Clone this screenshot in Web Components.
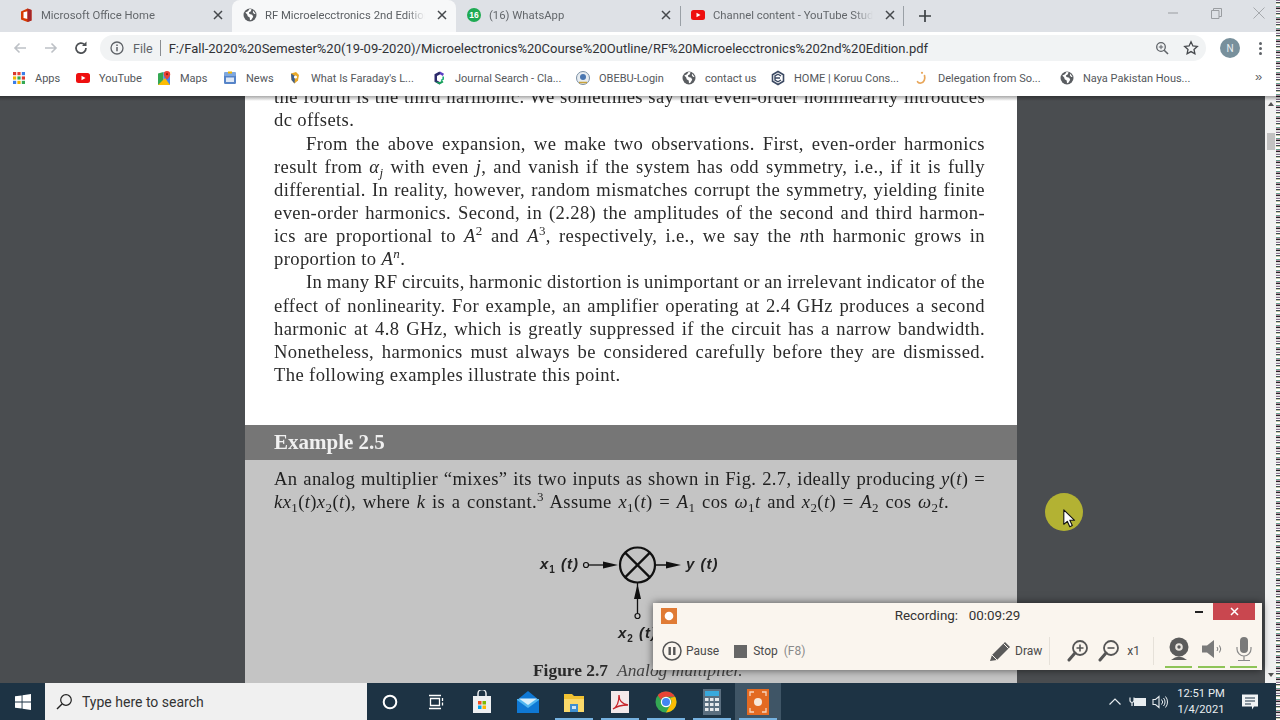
<!DOCTYPE html>
<html><head><meta charset="utf-8"><title>Recording</title>
<style>
html,body{margin:0;padding:0;width:1280px;height:720px;overflow:hidden;background:#4a4d50}
pdf-line i{font-style:italic}
pdf-line sup,pdf-line sub{font-size:.7em;line-height:0}
pdf-line sub{vertical-align:-.28em}
pdf-line sup{vertical-align:.55em}
</style></head><body>
<app-root>
  <tab-strip>
    <tab-item icon="office">Microsoft Office Home</tab-item>
    <tab-item icon="globe" active>RF Microelecctronics 2nd Edition</tab-item>
    <tab-item icon="whatsapp">(16) WhatsApp</tab-item>
    <tab-item icon="youtube" sep>Channel content - YouTube Studio</tab-item>
  </tab-strip>
  <tool-bar></tool-bar>
  <book-marks>
    <book-mark icon="apps" style="--w:64px">Apps</book-mark>
    <book-mark icon="youtube" style="--w:81px">YouTube</book-mark>
    <book-mark icon="maps" style="--w:66px">Maps</book-mark>
    <book-mark icon="news" style="--w:65px">News</book-mark>
    <book-mark icon="shield" style="--w:144px">What Is Faraday's L...</book-mark>
    <book-mark icon="journal" style="--w:144px">Journal Search - Cla...</book-mark>
    <book-mark icon="seal" style="--w:106px">OBEBU-Login</book-mark>
    <book-mark icon="globe" style="--w:89px">contact us</book-mark>
    <book-mark icon="koruu" style="--w:144px">HOME | Koruu Cons...</book-mark>
    <book-mark icon="hook" style="--w:145px">Delegation from So...</book-mark>
    <book-mark icon="globe" style="--w:150px">Naya Pakistan Hous...</book-mark>
  </book-marks>
  <pdf-viewer>
    <pdf-line j>the fourth is the third harmonic. We sometimes say that even-order nonlinearity introduces</pdf-line>
    <pdf-line>dc offsets.</pdf-line>
    <pdf-line j indent>From the above expansion, we make two observations. First, even-order harmonics</pdf-line>
    <pdf-line j>result from <i>α<sub><i>j</i></sub></i> with even <i>j</i>, and vanish if the system has odd symmetry, i.e., if it is fully</pdf-line>
    <pdf-line j>differential. In reality, however, random mismatches corrupt the symmetry, yielding finite</pdf-line>
    <pdf-line j>even-order harmonics. Second, in (2.28) the amplitudes of the second and third harmon-</pdf-line>
    <pdf-line j>ics are proportional to <i>A</i><sup>2</sup> and <i>A</i><sup>3</sup>, respectively, i.e., we say the <i>n</i>th harmonic grows in</pdf-line>
    <pdf-line>proportion to <i>A</i><sup><i>n</i></sup>.</pdf-line>
    <pdf-line j indent>In many RF circuits, harmonic distortion is unimportant or an irrelevant indicator of the</pdf-line>
    <pdf-line j>effect of nonlinearity. For example, an amplifier operating at 2.4 GHz produces a second</pdf-line>
    <pdf-line j>harmonic at 4.8 GHz, which is greatly suppressed if the circuit has a narrow bandwidth.</pdf-line>
    <pdf-line j>Nonetheless, harmonics must always be considered carefully before they are dismissed.</pdf-line>
    <pdf-line>The following examples illustrate this point.</pdf-line>
    <pdf-example slot="example" heading="Example 2.5">
      <pdf-line j>An analog multiplier “mixes” its two inputs as shown in Fig. 2.7, ideally producing <i>y</i>(<i>t</i>) =</pdf-line>
      <pdf-line style="word-spacing:1.600px"><i>kx</i><sub>1</sub>(<i>t</i>)<i>x</i><sub>2</sub>(<i>t</i>), where <i>k</i> is a constant.<sup>3</sup> Assume <i>x</i><sub>1</sub>(<i>t</i>) = <i>A</i><sub>1</sub> cos <i>ω</i><sub>1</sub><i>t</i> and <i>x</i><sub>2</sub>(<i>t</i>) = <i>A</i><sub>2</sub> cos <i>ω</i><sub>2</sub><i>t</i>.</pdf-line>
      <mult-figure></mult-figure>
    </pdf-example>
  </pdf-viewer>
  <task-bar></task-bar>
  <noise-strip></noise-strip>
  <rec-panel></rec-panel>
  <cursor-spot></cursor-spot>
</app-root>
<script>
const ICONS={
office:'<path d="M3 4.5 9.5 1.5 13.5 3v10.5L9.5 15 3 12.500z" fill="#d83b01"/><path d="M5.500 5.200 9.500 4.300v7.700L5.500 11z" fill="#fff"/><path d="M9.500 1.500 13.500 3v10.500L9.500 15z" fill="#a4262c"/>',
globe:'<circle cx="8" cy="8" r="6.500" fill="#5a5d61"/><path d="M3.300 5.500 6 4.300l1.500-2.300 2 .3-.6 2-2 1.200.5 1.600 2.800.6 1 2-1.800 3-1.400.6-.3-2.800-2-1.200-.5-1.800zM11 3.500l2.600 3.200-1.400.2-1.300-1.500z" fill="#fff"/>',
whatsapp:'<circle cx="8" cy="8" r="7" fill="#1faa53"/><text x="8" y="11" font-family="Liberation Sans" font-size="8.500" font-weight="700" fill="#fff" text-anchor="middle">16</text>',
youtube:'<rect x="1" y="3" width="14" height="10" rx="2.500" fill="#ee0f0f"/><path d="M6.500 5.700v4.600L10.500 8z" fill="#fff"/>',
apps:'<g><rect x="2" y="2" width="3.200" height="3.200" fill="#d9392f"/><rect x="6.400" y="2" width="3.200" height="3.200" fill="#ea4335"/><rect x="10.800" y="2" width="3.200" height="3.200" fill="#3a7de8"/><rect x="2" y="6.400" width="3.200" height="3.200" fill="#f0b400"/><rect x="6.400" y="6.400" width="3.200" height="3.200" fill="#34a853"/><rect x="10.800" y="6.400" width="3.200" height="3.200" fill="#d9392f"/><rect x="2" y="10.800" width="3.200" height="3.200" fill="#3a7de8"/><rect x="6.400" y="10.800" width="3.200" height="3.200" fill="#f0b400"/><rect x="10.800" y="10.800" width="3.200" height="3.200" fill="#34a853"/></g>',
maps:'<path d="M2 3.500 7.500 2v12L2 15z" fill="#34a853"/><path d="M7.500 2 14 3.500V15L7.500 14z" fill="#4285f4"/><path d="M2 15 9 8l5 7z" fill="#fbbc04"/><path d="M11 1a3.200 3.200 0 0 1 3.200 3.200C14.200 6.500 11 9.500 11 9.500S7.800 6.500 7.800 4.200A3.200 3.200 0 0 1 11 1z" fill="#ea4335"/><circle cx="11" cy="4.200" r="1.100" fill="#8f1d15"/>',
news:'<rect x="2" y="3.500" width="12" height="10.500" rx="1.200" fill="#5684c8"/><rect x="2" y="2" width="12" height="4" rx="1" fill="#7fa7dd"/><rect x="4" y="7.500" width="8" height="4.500" fill="#dfe8f5"/><rect x="6" y="1.500" width="4" height="2" fill="#f0b400"/>',
shield:'<path d="M4 3.500 9 2l3 3-1 5.500-3.500 3L4.500 10z" fill="#e8a92a"/><path d="M4 3.500 8 6l-.5 7.500L4.500 10z" fill="#3d5f8f"/><circle cx="8.500" cy="7" r="1.600" fill="#fff"/>',
journal:'<path d="M8.500 1.500 3.500 4.300v7.400l5 2.800 1.200-2.100-3.700-2V6l3.700-2z" fill="#2c2a6b"/><path d="M9 1.500l4 2.300-1.200 2.100L9 4.300z" fill="#5b3fc4"/><path d="M13 6.500v3l-3 1.700-.1-1.500 1.500-.9V6.500z" fill="#1fae7a"/><path d="M4 11.600 8.500 14.500l4-2.300-1.200-1.600-2.800 1.600z" fill="#17a05a"/>',
seal:'<circle cx="8" cy="8" r="6.500" fill="#e8edf1" stroke="#7a8fa3"/><circle cx="8" cy="7" r="3" fill="#4a76b0"/><path d="M4 12.500h8" stroke="#c9a23a" stroke-width="1.500"/>',
koruu:'<path d="M8 1.500 13.500 4.700v6.600L8 14.500 2.500 11.300V4.700z" fill="none" stroke="#3c4a63" stroke-width="1.600"/><path d="M11 6 8 4.200 5 6v4l3 1.800 3-1.800M5.500 8H10" fill="none" stroke="#3c4a63" stroke-width="1.400"/>',
hook:'<path d="M10.500 5.500c1 3.500-.5 7-3.500 7.500-1.500.2-3-.3-3.500-1.300" fill="none" stroke="#e8a65a" stroke-width="1.700" stroke-linecap="round"/><circle cx="8" cy="2.800" r="1.100" fill="#e8a65a"/>'
};
function svgIcon(n,s=16){return `<svg width="${s}" height="${s}" viewBox="0 0 16 16" style="display:block;flex:none">${ICONS[n]||''}</svg>`}
function mk(name,css,html,extra){
  customElements.define(name,class extends HTMLElement{
    constructor(){super();const r=this.attachShadow({mode:'open'});
      r.innerHTML=`<style>${css}</style>`+(typeof html==='function'?html(this):html);}
    connectedCallback(){if(extra)extra(this)}
  });
}
const UI='Roboto,"Noto Sans",sans-serif';
mk('app-root',`:host{display:flex;flex-direction:column;position:relative;width:1280px;height:720px;overflow:hidden;font-family:${UI}}`,`<slot></slot>`);
mk('tab-strip',`:host{display:flex;height:32px;padding-left:8px;background:#dee1e6;flex:none;position:relative;color:#5f6368}
 .plus{width:40px;display:flex;align-items:center;justify-content:center;padding-left:1px;padding-bottom:1px;box-sizing:border-box}
 .ctl{margin-left:auto;display:flex;width:128px;color:#9a9da1}
 .ctl div{width:43px;display:flex;align-items:center;justify-content:center;padding-bottom:6px}`,
 `<slot></slot><div class="plus"><svg width="12" height="12" viewBox="0 0 12 12"><path d="M6 0v12M0 6h12" stroke="#3c4043" stroke-width="1.700"/></svg></div>
 <div class="ctl"><div><svg width="10" height="10"><path d="M0 5h10" stroke="#9a9da1"/></svg></div><div><svg width="11" height="11"><path d="M.5 2.500h7.500v8H.5zM2.500 2.500V.5h8v8H8" fill="none" stroke="#9a9da1"/></svg></div><div><svg width="12" height="12"><path d="M.5.5l11 11M11.500.5l-11 11" stroke="#a6a9ad"/></svg></div></div>`);
mk('tab-item',`:host{display:flex;align-items:center;width:224px;height:32px;box-sizing:border-box;padding:0 7px 2px 10px;font-size:11.300px;position:relative;color:#63676b;flex:none}
 :host([active]){background:#f7f8f9;border-radius:8px 8px 0 0;color:#5a5e62}
 .ic{width:16px;margin-right:7px;flex:none}
 .t{flex:1;overflow:hidden;white-space:nowrap;-webkit-mask-image:linear-gradient(90deg,#000 88%,transparent);mask-image:linear-gradient(90deg,#000 88%,transparent)}
 .x{margin-left:10px;width:14px;flex:none;display:flex;justify-content:center}
 :host([sep])::after,:host([sep])::before{content:"";position:absolute;top:6px;height:20px;width:1px;background:#9aa0a6}
 :host([sep])::before{left:0}:host([sep])::after{right:0}`,
 h=>`<div class="ic">${svgIcon(h.getAttribute('icon'))}</div><div class="t"><slot></slot></div><div class="x"><svg width="10" height="10"><path d="M1 1l8 8M9 1l-8 8" stroke="#45484c" stroke-width="1.500"/></svg></div>`);
mk('tool-bar',`:host{display:flex;align-items:center;height:32px;background:#fff;flex:none;color:#5f6368;font-size:12.5px;box-sizing:border-box}
 .n{width:30px;display:flex;justify-content:center;flex:none}
 .om{display:flex;align-items:center;width:1106px;height:26px;background:#f1f3f4;border-radius:13px;margin-left:5px;flex:none;box-sizing:border-box;padding-left:10px}
 .file{margin-left:9px;color:#5f6368}
 .bar{width:1px;height:16px;background:#8a8d91;margin:0 8px 0 7px}
 .u{color:#303236;white-space:nowrap;flex:1;font-size:13px}
 .r{display:flex;gap:14px;align-items:center;margin-right:7px}
 .av{width:20px;height:20px;border-radius:50%;background:#78909c;color:#e8eef0;font-size:10px;display:flex;align-items:center;justify-content:center;margin-left:14px;flex:none}
 .dots{margin-left:19px;width:4px;display:flex;flex-direction:column;gap:2px}
 .dots b{width:3px;height:3px;border-radius:50%;background:#5f6368;display:block}`,
 `<div class="n" style="margin-left:5px"><svg width="16" height="16" viewBox="0 0 16 16"><path d="M14 8H3M7.500 3.500 3 8l4.500 4.500" fill="none" stroke="#bdc1c6" stroke-width="1.600"/></svg></div>
 <div class="n" style="margin-left:1px"><svg width="16" height="16" viewBox="0 0 16 16"><path d="M2 8h11M8.500 3.500 13 8l-4.500 4.500" fill="none" stroke="#bdc1c6" stroke-width="1.600"/></svg></div>
 <div class="n"><svg width="16" height="16" viewBox="0 0 16 16"><path d="M13 8a5 5 0 1 1-1.500-3.500" fill="none" stroke="#4d5054" stroke-width="1.700"/><path d="M13.500 1.500v4.500H9z" fill="#4d5054"/></svg></div>
 <div class="om" style="margin-left:4px"><svg width="14" height="14" viewBox="0 0 14 14"><circle cx="7" cy="7" r="6" fill="none" stroke="#5f6368" stroke-width="1.300"/><path d="M7 6v4.200M7 3.500v1.400" stroke="#5f6368" stroke-width="1.500"/></svg>
 <span class="file">File</span><span class="bar"></span><span class="u">F:/Fall-2020%20Semester%20(19-09-2020)/Microelectronics%20Course%20Outline/RF%20Microelecctronics%202nd%20Edition.pdf</span>
 <div class="r"><svg width="14" height="14" viewBox="0 0 14 14"><circle cx="6" cy="6" r="4.300" fill="none" stroke="#5f6368" stroke-width="1.300"/><path d="M9.200 9.200 13 13" stroke="#5f6368" stroke-width="1.600"/><path d="M6 3.800v4.400M3.800 6h4.400" stroke="#5f6368"/></svg>
 <svg width="16" height="16" viewBox="0 0 16 16"><path d="M8 1.800l1.900 4.100 4.400.5-3.300 3 .9 4.400L8 11.600l-3.900 2.200.9-4.400-3.300-3 4.400-.5z" fill="none" stroke="#45484c" stroke-width="1.300"/></svg></div></div>
 <div class="av">N</div><div class="dots"><b></b><b></b><b></b></div>`);
mk('book-marks',`:host{display:flex;align-items:center;height:32px;background:#fff;padding:0 0 4px 11px;flex:none;position:relative;box-sizing:border-box}
 .more{position:absolute;left:1255px;top:5px;font-size:13px;color:#5f6368;font-family:"Liberation Sans",sans-serif}`,`<slot></slot><span class="more">»</span>`);
mk('book-mark',`:host{display:flex;align-items:center;width:var(--w);flex:none;font-size:11px;color:#54575b;white-space:nowrap}
 .i{width:16px;margin-right:8px;flex:none}`,h=>`<div class="i">${svgIcon(h.getAttribute('icon'))}</div><slot></slot>`);
mk('pdf-viewer',`:host{display:block;height:587px;background:#4a4d50;flex:none;position:relative;overflow:hidden}
 .sh{position:absolute;left:0;right:0;top:0;height:5px;background:linear-gradient(#0005,#0000);z-index:2}
 .paper{width:772px;margin:-10.800px 0 0 245px;background:#fff;color:#2b2b2b;font:18.6px/23.17px "Liberation Serif",serif;height:700px;filter:blur(.25px)}
 .txt{padding:0 32px 38.300px 29px;box-sizing:content-box}
 .sb{position:absolute;left:1265px;top:0;bottom:0;width:11px;background:#f1f1f1}
 .up,.dn{position:absolute;left:3px;width:0;height:0;border:3.500px solid transparent}
 .up{top:3px;border-bottom:4px solid #505050}.dn{bottom:3px;border-top:4px solid #505050}
 .th{position:absolute;left:2px;top:37px;width:8px;height:17px;background:#c1c1c1}`,
 `<div class="sh"></div><div class="paper"><div class="txt"><slot></slot></div><slot name="example"></slot></div><div class="sb"><div class="up"></div><div class="th"></div><div class="dn"></div></div>`);
mk('pdf-line',`:host{display:block;height:23.17px;white-space:nowrap;text-align:left;letter-spacing:.38px}
 :host([j]){white-space:normal;text-align:justify;text-align-last:justify;word-spacing:-2.500px}
 :host([indent]){text-indent:32px}`,`<slot></slot>`);
mk('pdf-example',`:host{display:block;background:#c4c4c4;height:300px;color:#1f1f1f}
 .h{height:35px;background:#767676;color:#f0f0f0;font-weight:700;font-size:21px;line-height:35px;padding-left:29px}
 .b{padding:7px 32px 0 29px}`,h=>`<div class="h">${h.getAttribute('heading')}</div><div class="b"><slot></slot></div>`);
mk('mult-figure',`:host{display:block;margin:0 0 0 -29px;width:772px}
 svg{display:block;margin:18px 0 0 275px;overflow:visible}
 .cap{margin:16px 0 0 288px;font-size:17.4px;line-height:22px;white-space:nowrap;color:#2a2a2a;letter-spacing:0}
 .cap b{margin-right:9px}.cap i{color:#444}`,
 `<svg width="200" height="112" viewBox="0 0 200 112">
 <g font-family="Liberation Sans" font-weight="700" font-style="italic" font-size="15" fill="#222" letter-spacing="1">
  <text x="20" y="38">x<tspan font-size="10" dy="4" font-style="normal">1</tspan><tspan dy="-4"> (t)</tspan></text>
  <text x="166" y="38">y (t)</text>
  <text x="98" y="107">x<tspan font-size="10" dy="4" font-style="normal">2</tspan><tspan dy="-4"> (t)</tspan></text></g>
 <g fill="none" stroke="#111"><circle cx="66" cy="34" r="2.500" stroke-width="1.200"/><path d="M69 34h14" stroke-width="1.300"/><circle cx="117.500" cy="34" r="17.500" stroke-width="2.200"/><path d="M105.100 21.600l24.800 24.800M129.900 21.600l-24.800 24.800" stroke-width="2.200"/><path d="M135 34h11M117.500 52v30" stroke-width="1.300"/><circle cx="117.500" cy="85" r="2.500" stroke-width="1.200"/></g>
 <path d="M83 30.500 98 34l-15 3.500zM146 30.500 161 34l-15 3.500zM114 68 117.500 53l3.500 15z" fill="#111"/></svg>
 <div class="cap"><b>Figure 2.7</b><i>Analog multiplier.</i></div>`);
mk('task-bar',`:host{display:flex;height:37px;background:#1d3344;color:#fff;flex:none;align-items:stretch;position:relative}
 .w{width:45px;display:flex;align-items:center;justify-content:center;flex:none}
 .s{width:322px;background:#f0f0f0;color:#333;display:flex;align-items:center;font-size:14px;flex:none}
 .s svg{margin:0 9px 0 10px}
 .c{width:46px;display:flex;align-items:center;justify-content:center;flex:none;box-sizing:border-box;position:relative}
 .u::after{content:"";position:absolute;left:4px;right:4px;bottom:0;height:2px;background:#76b2e0}
 .a{background:#3f5566}
 .tray{margin-left:auto;display:flex;align-items:center;padding-right:10px}
 .t{width:23px;display:flex;justify-content:center;flex:none}
 .clk{width:58px;text-align:center;font-size:11.200px;line-height:16px;color:#e8edf0;flex:none}
 .n{width:40px;display:flex;justify-content:center;flex:none}`,
 `<div class="w"><svg width="16" height="16" viewBox="0 0 16 16"><path d="M0 2.300 6.600 1.400v6.100H0zM7.500 1.300 16 0v7.500H7.500zM0 8.400h6.600v6.100L0 13.700zM7.500 8.400H16V16l-8.500-1.200z" fill="#fff"/></svg></div>
 <div class="s"><svg width="18" height="18" viewBox="0 0 18 18"><circle cx="11" cy="7" r="5.300" fill="none" stroke="#222" stroke-width="1.200"/><path d="M7 11 2 16" stroke="#222" stroke-width="1.400"/></svg>Type here to search</div>
 <div class="c"><svg width="16" height="16"><circle cx="8" cy="8" r="6.300" fill="none" stroke="#fff" stroke-width="2"/></svg></div>
 <div class="c"><svg width="18" height="16" viewBox="0 0 18 16"><path d="M3.500 4.500h9v7h-9zM2 1.500h12M2 14.500h12" fill="none" stroke="#fff" stroke-width="1.300"/><path d="M15.500 4v8" stroke="#fff" stroke-width="1.300" stroke-dasharray="3 1.500"/></svg></div>
 <div class="c"><svg width="22" height="24" viewBox="0 0 22 24"><path d="M2 6h18v17H2z" fill="#eef0f2"/><path d="M7 7V3.500a4 4 0 0 1 8 0V7" fill="none" stroke="#eef0f2" stroke-width="1.500"/><path d="M7 11h3.500v3.500H7z" fill="#f25022"/><path d="M11.500 11H15v3.500h-3.500z" fill="#7fba00"/><path d="M7 15.500h3.500V19H7z" fill="#00a4ef"/><path d="M11.500 15.500H15V19h-3.500z" fill="#ffb900"/></svg></div>
 <div class="c"><svg width="24" height="24" viewBox="0 0 24 24"><path d="M1 10 12 1l11 9v13H1z" fill="#0f78d4"/><path d="M1 10l11 8 11-8v-1H1z" fill="#51b6f0"/><path d="M3 8.500h18L12 15z" fill="#d9effb"/></svg></div>
 <div class="c u"><svg width="22" height="22" viewBox="0 0 22 22"><path d="M1 3h8l2 2h10v16H1z" fill="#f1c232"/><path d="M1 8h20v13H1z" fill="#fbd96a"/><path d="M7 13h8v8H7z" fill="#3f8fd0"/><path d="M9 15h4v3H9z" fill="#cfe6f7"/></svg></div>
 <div class="c u"><svg width="20" height="24" viewBox="0 0 20 24"><path d="M1 1h18v22H1z" fill="#f4e9ea"/><path d="M3 19c4-2 6-8 6-14 0 6 3 9 9 10-6 0-11 1-15 4z" fill="none" stroke="#c8252b" stroke-width="1.300"/></svg></div>
 <div class="c u"><svg width="22" height="22" viewBox="0 0 22 22"><circle cx="11" cy="11" r="10.500" fill="#34a853"/><path d="M11 .5a10.500 10.500 0 0 1 9.100 5.300H11A5.200 5.200 0 0 0 6 9L2.800 4.200A10.500 10.500 0 0 1 11 .5z" fill="#ea4335"/><path d="M20.100 5.800A10.500 10.500 0 0 1 11 21.500l4.500-7.900A5.200 5.200 0 0 0 15 7z" fill="#fbbc04"/><circle cx="11" cy="11" r="5.200" fill="#fff"/><circle cx="11" cy="11" r="4" fill="#4285f4"/></svg></div>
 <div class="c u"><svg width="18" height="26" viewBox="0 0 18 26"><rect width="18" height="26" fill="#5b6f80"/><rect x="2" y="2" width="14" height="5" fill="#39a9dc"/><g fill="#e6e9ec"><rect x="2" y="9" width="3.500" height="3"/><rect x="7" y="9" width="3.500" height="3"/><rect x="12" y="9" width="4" height="3"/><rect x="2" y="14" width="3.500" height="3"/><rect x="7" y="14" width="3.500" height="3"/><rect x="12" y="14" width="4" height="3"/><rect x="2" y="19" width="3.500" height="3"/><rect x="7" y="19" width="3.500" height="3"/><rect x="12" y="19" width="4" height="3"/></g></svg></div>
 <div class="c u a"><svg width="22" height="26" viewBox="0 0 22 26"><rect width="22" height="26" fill="#e36a22"/><circle cx="11" cy="13" r="4" fill="#f7e7d9"/><path d="M3 7V3h4M15 3h4v4M19 19v4h-4M7 23H3v-4" fill="none" stroke="#f7d5bd" stroke-width="1.300"/></svg></div>
 <div class="tray"><div class="t"><svg width="12" height="7"><path d="M.5 6.500 6 1l5.500 5.500" fill="none" stroke="#e8edf0" stroke-width="1.200"/></svg></div>
 <div class="t"><svg width="17" height="12" viewBox="0 0 17 12"><rect x="5.500" y="2.500" width="11" height="7" fill="#e8edf0" stroke="#e8edf0"/><path d="M1 1.500v3a2 2 0 0 0 4 0v-3M3 7v3" fill="none" stroke="#e8edf0" stroke-width="1.200"/></svg></div>
 <div class="t"><svg width="17" height="14" viewBox="0 0 17 14"><path d="M1 4.500h2.500L7 1.500v11l-3.500-3H1z" fill="none" stroke="#e8edf0" stroke-width="1.100"/><path d="M9.500 4.500a3.500 3.500 0 0 1 0 5M11.500 3a6 6 0 0 1 0 8M13.500 1.500a8.500 8.500 0 0 1 0 11" fill="none" stroke="#e8edf0"/></svg></div>
 <div class="clk">12:51 PM<br>1/4/2021</div>
 <div class="n"><svg width="18" height="18" viewBox="0 0 18 18"><path d="M1 1.500h16v12h-4l-2 3v-3H1z" fill="#f2f4f5"/><path d="M4 5h10M4 8h10M4 11h6" stroke="#1d3344"/></svg></div></div>`);
mk('noise-strip',`:host{position:absolute;right:0;top:0;width:4px;height:720px;background:repeating-linear-gradient(180deg,#8a6f8c 0 1px,#fff 1px 2px,#3a4b52 2px 3px,#c9c9a8 3px 4px,#fff 4px 6px,#66a08e 6px 7px,#b48aa0 7px 8px,#222 8px 9px,#ddd 9px 11px)}`,``);
mk('rec-panel',`:host{position:absolute;left:653px;top:603px;width:609px;height:67px;background:#faf5ee;box-shadow:0 0 8px #0009;color:#4a4a4a;font-size:12px;display:flex;flex-direction:column;box-sizing:border-box}
 .top{display:flex;height:26px;align-items:center;position:relative;padding-left:8px;flex:none}
 .title{position:absolute;left:0;right:0;top:5px;text-align:center;font-size:13.4px;color:#333;word-spacing:2px}
 .ctrl{margin-left:auto;display:flex;align-items:flex-start;height:100%;position:relative;margin-right:7px}
 .min{width:8px;height:2px;background:#222;margin:8px 10px 0 0}
 .cl{width:42px;height:17px;background:#c9474f;color:#fff;display:flex;align-items:center;justify-content:center}
 .bot{display:flex;align-items:center;height:30px;padding-left:9px;margin-top:7px}
 .lb{margin-left:4px}
 .stp{width:13px;height:13px;background:#666;margin-left:15px}
 .g{color:#8a8a8a;margin-left:6px}
 .right{margin-left:auto;display:flex;align-items:center;height:100%;padding-right:5px}
 .sep{width:1px;height:28px;background:#e6e1d9;margin:0 10px}
 .m{position:relative;width:27px;display:flex;justify-content:center;margin-left:6px;height:100%;align-items:center;padding-bottom:4px;box-sizing:border-box}
 .m::after{content:"";position:absolute;left:0;right:0;bottom:-2px;height:2.500px;background:#8ec457}`,
 `<div class="top"><svg width="16" height="16" viewBox="0 0 16 16"><rect width="16" height="16" fill="#e07b35"/><circle cx="8" cy="8" r="4.300" fill="#fff"/></svg>
 <div class="title">Recording:&nbsp; 00:09:29</div>
 <div class="ctrl"><div class="min"></div><div class="cl"><svg width="9" height="9"><path d="M1 1l7 7M8 1l-7 7" stroke="#fff" stroke-width="1.500"/></svg></div></div></div>
 <div class="bot"><svg width="20" height="20" viewBox="0 0 20 20"><circle cx="10" cy="10" r="9" fill="none" stroke="#555" stroke-width="1.500"/><path d="M7.700 6v8M12.300 6v8" stroke="#555" stroke-width="2.400"/></svg><span class="lb">Pause</span><div class="stp"></div><span style="margin-left:6px">Stop</span><span class="g">(F8)</span>
 <div class="right">
  <svg width="23" height="22" viewBox="0 0 23 22"><path d="M1 21l2-6L16 2l5 5L8 20z" fill="#5a5a5a"/><path d="M3 15l5 5M14.500 3.500l5 5" stroke="#faf5ee"/></svg><span class="lb" style="margin-left:3px">Draw</span>
  <div class="sep" style="margin-left:7px"></div>
  <svg width="22" height="24" viewBox="0 0 22 24" style="margin-left:7px"><circle cx="13" cy="9" r="7" fill="none" stroke="#555" stroke-width="1.800"/><path d="M8 14 2 21" stroke="#555" stroke-width="3" stroke-linecap="round"/><path d="M13 5.500v7M9.500 9h7" stroke="#555" stroke-width="1.600"/></svg>
  <svg width="22" height="24" viewBox="0 0 22 24" style="margin-left:9px"><circle cx="13" cy="9" r="7" fill="none" stroke="#555" stroke-width="1.800"/><path d="M8 14 2 21" stroke="#555" stroke-width="3" stroke-linecap="round"/><path d="M9.500 9h7" stroke="#555" stroke-width="1.600"/></svg>
  <span style="margin-left:7px">x1</span>
  <div class="sep" style="margin-left:13px;margin-right:1px"></div>
  <div class="m" style="margin-left:10px"><svg width="22" height="24" viewBox="0 0 22 24"><circle cx="11" cy="10" r="9.500" fill="#5b5b5b"/><circle cx="11" cy="10" r="3.800" fill="#e8e4de"/><circle cx="11" cy="10" r="1.700" fill="#5b5b5b"/><path d="M3 23q8-7 16 0z" fill="#5b5b5b"/></svg></div>
  <div class="m"><svg width="24" height="20" viewBox="0 0 24 20"><path d="M2 6.500h5L14 1v18l-7-5.500H2z" fill="#7a7a7a"/><path d="M17 8a3 3 0 0 1 0 4M19.500 6.500a6 6 0 0 1 0 7" fill="none" stroke="#7a7a7a"/></svg></div>
  <div class="m" style="margin-left:5px"><svg width="18" height="26" viewBox="0 0 18 26"><rect x="5" y="1" width="8" height="16" rx="4" fill="#7a7a7a"/><path d="M2 11v2a7 7 0 0 0 14 0v-2M9 20v4M3 24.500h12" fill="none" stroke="#8a8a8a" stroke-width="1.200"/></svg></div>
 </div></div>`);
mk('cursor-spot',`:host{position:absolute;left:1045px;top:493px;width:38px;height:38px;border-radius:50%;background:#b3b233;display:block}
 svg{position:absolute;left:18px;top:16px;overflow:visible}`,
 `<svg width="14" height="20" viewBox="0 0 14 20"><path d="M.8.8v14.500l3.500-3 2.500 5.500 2.500-1.200-2.500-5.300h4.800z" fill="#fff" stroke="#111" stroke-width="1.100" stroke-linejoin="round"/></svg>`);
</script>
</body></html>
